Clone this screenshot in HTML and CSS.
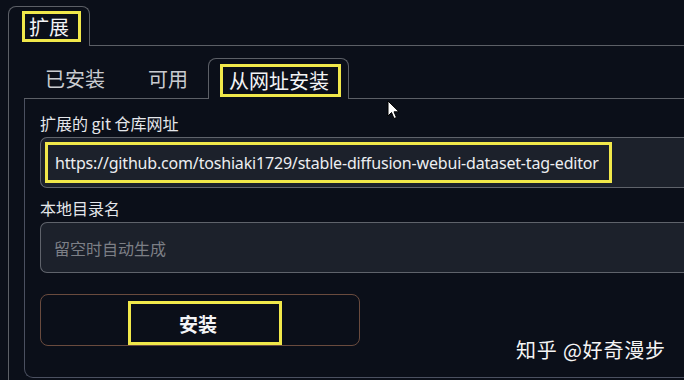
FILE: index.html
```html
<!DOCTYPE html>
<html lang="zh">
<head>
<meta charset="utf-8">
<link rel="stylesheet" href="styles.css">
</head>
<body>
<div class="page">
  <div class="outer-tabs">
    <div class="outer-tab"><span class="hl hl-outer">扩展</span></div>
    <div class="tab-fill"></div>
  </div>
  <div class="outer-panel">
    <div class="inner-tabs">
      <div class="inner-tab t1">已安装</div>
      <div class="inner-tab t2">可用</div>
      <div class="inner-tab active"><span class="hl hl-inner">从网址安装</span></div>
      <div class="tab-fill"></div>
    </div>
    <div class="inner-panel">
      <div class="label l1">扩展的 git 仓库网址</div>
      <div class="input">
        <span class="hl hl-url">https://github.com/toshiaki1729/stable-diffusion-webui-dataset-tag-editor</span>
      </div>
      <div class="label l2">本地目录名</div>
      <div class="input placeholder">留空时自动生成</div>
      <div class="button-row">
        <div class="button"><span class="hl hl-btn">安装</span></div>
      </div>
    </div>
  </div>
</div>
<svg class="cursor" width="14" height="20" viewBox="0 0 14 20">
  <path d="M1 1 L1 16 L4.5 12.5 L7 18.5 L9.5 17.5 L7 11.8 L12 11.8 Z" fill="#fff" stroke="#000" stroke-width="1"/>
</svg>
<div class="watermark">知乎 @好奇漫步</div>
</body>
</html>
```
FILE: styles.css
```css
html, body {
  margin: 0;
  padding: 0;
  background: #0b0f19;
  overflow: hidden;
  width: 684px;
  height: 380px;
  font-family: "Noto Sans", "Noto Sans CJK SC", sans-serif;
  color: #e5e7eb;
}
.page {
  padding: 6px 0 0 8px;
}
.outer-tabs {
  display: flex;
  height: 40px;
}
.outer-tab {
  box-sizing: border-box;
  width: 82px;
  height: 40px;
  border: 1px solid #5c5f66;
  border-bottom: none;
  border-radius: 8px 8px 0 0;
  padding: 4px 0 0 13px;
  font-family: "Noto Sans CJK SC", sans-serif;
  font-size: 20px;
  color: #f3f4f6;
}
.tab-fill {
  flex: 1;
  border-bottom: 1px solid #5c5f66;
}
.hl {
  display: inline-flex;
  align-items: center;
  box-sizing: border-box;
  border: 3px solid #f1e84a;
}
.hl-outer {
  width: 59px;
  height: 31px;
  padding-left: 4px;
  line-height: 1;
}
.outer-panel {
  border-left: 1px solid #5c5f66;
  padding: 12px 0 0 15px;
  height: 340px;
}
.inner-tabs {
  display: flex;
  height: 41px;
}
.inner-tab {
  box-sizing: border-box;
  height: 41px;
  font-family: "Noto Sans CJK SC", sans-serif;
  font-size: 20px;
  color: #c9cbd0;
  border-bottom: 1px solid #5c5f66;
  padding-top: 6px;
}
.t1 { width: 102px; padding-left: 21px; }
.t2 { width: 82px; padding-left: 22px; }
.inner-tab.active {
  width: 141px;
  border: 1px solid #5c5f66;
  border-bottom: none;
  border-radius: 8px 8px 0 0;
  padding: 5px 0 0 11px;
  color: #f3f4f6;
}
.hl-inner {
  width: 121px;
  height: 33px;
  padding-left: 6px;
  line-height: 1;
}
.inner-panel {
  border-left: 1px solid #4b5060;
  border-bottom: 1px solid #4b5060;
  border-radius: 0 0 0 9px;
  padding: 12px 0 0 15px;
  height: 266px;
}
.label {
  font-family: "Noto Sans CJK SC", sans-serif;
  font-size: 16px;
  color: #e5e7eb;
  line-height: 24px;
}
.l2 { margin-top: 8px; }
.input {
  box-sizing: border-box;
  height: 51px;
  margin-top: 2px;
  background: #1c212b;
  border: 1px solid #5f636b;
  border-right: none;
  border-radius: 7px 0 0 7px;
  display: flex;
  align-items: center;
  padding-left: 4px;
}
.hl-url {
  height: 41px;
  width: 567px;
  padding-left: 7px;
  font-family: "Noto Sans", sans-serif;
  font-size: 16px;
  color: #eceef1;
  letter-spacing: -0.18px;
  white-space: nowrap;
}
.placeholder {
  padding-left: 13px;
  font-family: "Noto Sans CJK SC", sans-serif;
  font-size: 16px;
  color: #7c7f86;
}
.button-row {
  margin-top: 21px;
}
.button {
  box-sizing: border-box;
  width: 320px;
  height: 52px;
  border: 1px solid #6a4b3e;
  border-radius: 8px;
  padding: 6px 0 0 87px;
}
.hl-btn {
  width: 154px;
  height: 44px;
  justify-content: flex-start;
  padding-left: 48px;
  font-family: "Noto Sans CJK SC", sans-serif;
  font-weight: 700;
  font-size: 19px;
  color: #f3f4f6;
}
.cursor {
  position: absolute;
  left: 387px;
  top: 100px;
}
.watermark {
  position: absolute;
  left: 516px;
  top: 335px;
  font-family: "Noto Sans CJK SC", sans-serif;
  font-size: 20px;
  color: #f5f5f5;
  letter-spacing: 0.8px;
}
```
